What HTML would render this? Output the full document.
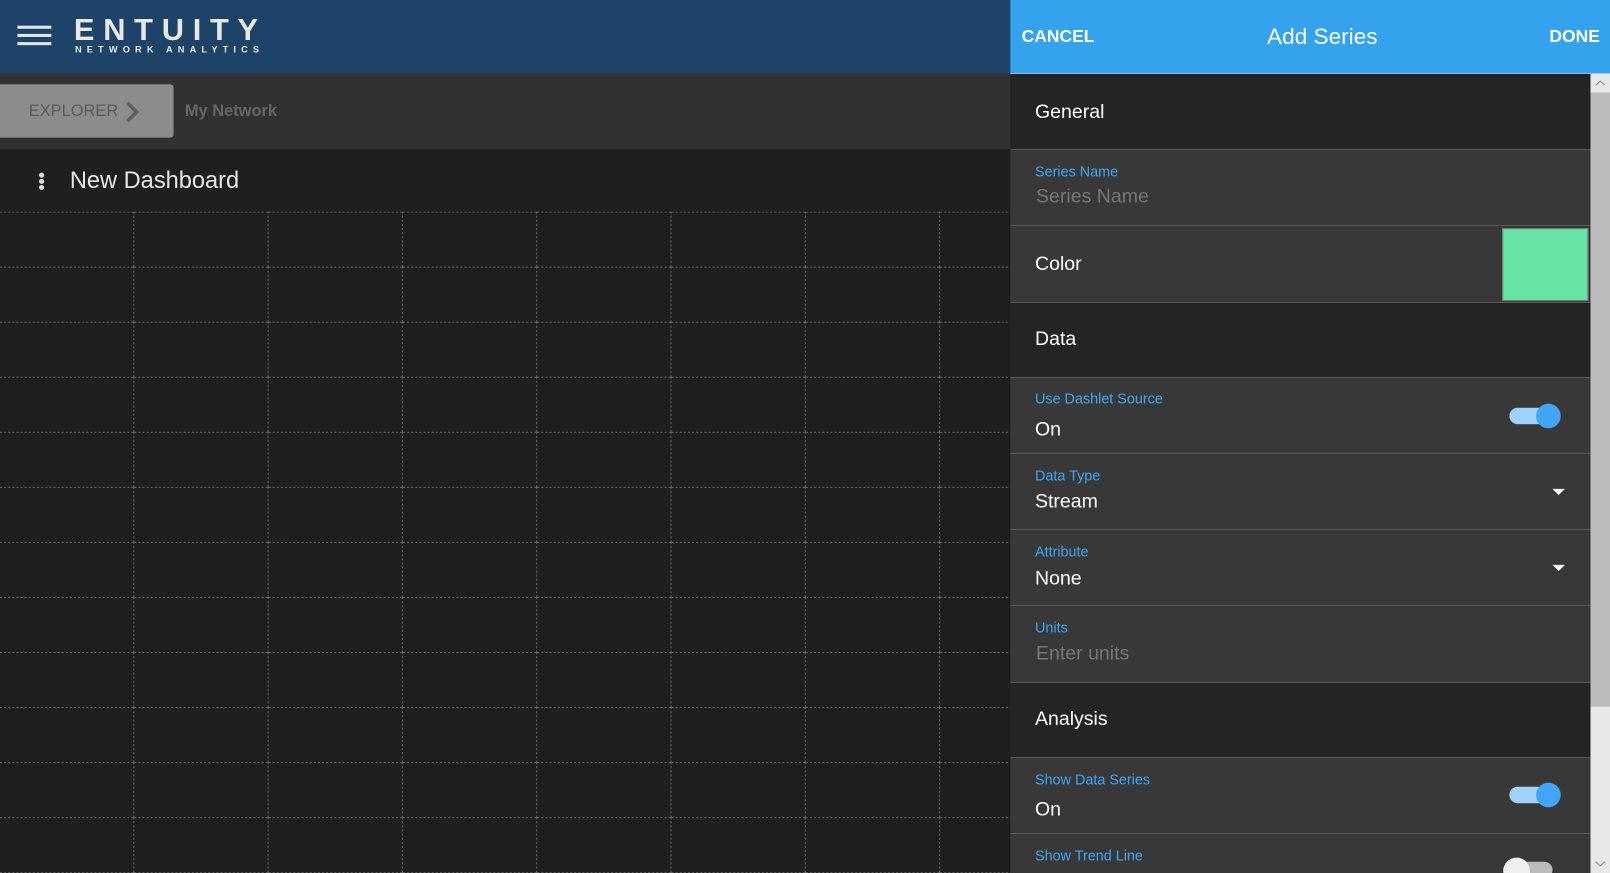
<!DOCTYPE html>
<html><head><style>
html,body{margin:0;padding:0;width:1610px;height:873px;overflow:hidden;background:#1e1e1e;font-family:"Liberation Sans",sans-serif}
#w{position:absolute;left:0;top:0;width:1568px;height:850px;transform:scale(1.02679,1.0271);transform-origin:0 0;overflow:hidden}
.a{position:absolute}
.top{left:0;top:0;width:984px;height:72px;background:#1d4468}
.hb{left:17px;width:33px;height:3px;background:#e6e6e6}
.logo{left:72px;top:13px;color:#e8e8e8;font-weight:bold;font-size:30px;letter-spacing:8.5px}
.sub{left:73px;top:43px;color:#e8e8e8;font-weight:bold;font-size:9px;letter-spacing:5px}
.bc{left:0;top:72px;width:984px;height:73px;background:#313131}
.exp{left:0;top:82px;width:169px;height:52px;background:#8c8c8c;border-radius:0 3px 3px 0}
.panel{left:984px;top:0;width:584px;height:850px;background:#383838}
.ph{left:0;top:0;width:584px;height:72px;background:#34a2ec;border-bottom:1px solid #8fc9f2;box-sizing:border-box;color:#fff}
.row{position:absolute;left:0;width:565px;border-bottom:1px solid #5a5a5a;box-sizing:border-box;background:#383838}
.dk{background:#242424}
.t{position:absolute;left:24px;color:#fff;font-size:19px}
.l{position:absolute;left:24px;top:13px;color:#42a5f5;font-size:14px}
.v{position:absolute;left:24px;top:40px;color:#fff;font-size:19px}
.ph2{color:#777}
.tg{position:absolute;left:486px;width:44px;height:16px;border-radius:8px;background:#9fd3fb}
.tg:after{content:"";position:absolute;right:-6px;top:-4px;width:24px;height:24px;border-radius:50%;background:#42a5f5}
.dd{position:absolute;left:528px;width:0;height:0;border-left:6px solid transparent;border-right:6px solid transparent;border-top:6px solid #fff}
</style></head><body><div id="w">
<div class="a top"></div>
<div class="a hb" style="top:25px"></div><div class="a hb" style="top:33px"></div><div class="a hb" style="top:41px"></div>
<div class="a logo">ENTUITY</div>
<div class="a sub">NETWORK ANALYTICS</div>
<div class="a bc"></div>
<div class="a exp"></div>
<div class="a" style="left:28px;top:100px;color:#5a5a5a;font-size:16px">EXPLORER</div>
<svg class="a" style="left:120px;top:97px" width="18" height="24"><path d="M4 3l9 9-9 9" stroke="#5e5e5e" stroke-width="3.5" fill="none"/></svg>
<div class="a" style="left:180px;top:100px;color:#666;font-size:16px;font-weight:bold">My Network</div>
<div class="a" style="left:0;top:145px;width:984px;height:62px;background:#1f1f1f"></div>
<div class="a" style="left:38px;top:168px;width:5px;height:5px;border-radius:50%;background:#ddd;box-shadow:0 6px 0 #ddd,0 12px 0 #ddd"></div>
<div class="a" style="left:68px;top:162px;color:#e6e6e6;font-size:23px">New Dashboard</div>
<svg class="a" style="left:0;top:206px" width="984" height="644">
<defs><pattern id="p" width="130.8" height="53.6" patternUnits="userSpaceOnUse">
<line x1="130.3" y1="0" x2="130.3" y2="53.6" stroke="#6a6a6a" stroke-width="1" stroke-dasharray="2,2"/>
<line x1="0" y1="0.5" x2="130.8" y2="0.5" stroke="#6a6a6a" stroke-width="1" stroke-dasharray="2,2"/>
</pattern></defs>
<rect width="984" height="644" fill="#1e1e1e"/><rect width="984" height="644" fill="url(#p)"/>
</svg>
<div class="a panel">
<div class="a ph">
<div class="a" style="left:11px;top:26px;font-size:17px;font-weight:bold">CANCEL</div>
<div class="a" style="left:250px;top:23px;font-size:22px">Add Series</div>
<div class="a" style="left:525px;top:26px;font-size:17px;font-weight:bold">DONE</div>
</div>
<div class="row dk" style="top:72px;height:74px"><div class="t" style="top:27px">General</div></div>
<div class="row" style="top:146px;height:74px"><div class="l">Series Name</div><div class="v ph2" style="top:35px;left:25px">Series Name</div></div>
<div class="row" style="top:220px;height:75px"><div class="t" style="top:27px">Color</div><div class="a" style="left:479px;top:2px;width:84px;height:71px;background:#68e3a6;border:1px solid #777;box-sizing:border-box"></div></div>
<div class="row dk" style="top:295px;height:73px"><div class="t" style="top:25px">Data</div></div>
<div class="row" style="top:368px;height:74px"><div class="l" style="top:12px">Use Dashlet Source</div><div class="v">On</div><div class="tg" style="top:29px"></div></div>
<div class="row" style="top:442px;height:74px"><div class="l">Data Type</div><div class="v" style="top:36px">Stream</div><div class="dd" style="top:34px"></div></div>
<div class="row" style="top:516px;height:74px"><div class="l">Attribute</div><div class="v" style="top:37px">None</div><div class="dd" style="top:34px"></div></div>
<div class="row" style="top:590px;height:75px"><div class="l">Units</div><div class="v ph2" style="top:36px;left:25px">Enter units</div></div>
<div class="row dk" style="top:665px;height:73px"><div class="t" style="top:25px">Analysis</div></div>
<div class="row" style="top:738px;height:74px"><div class="l">Show Data Series</div><div class="v">On</div><div class="tg" style="top:28px"></div></div>
<div class="row" style="top:812px;height:60px"><div class="l">Show Trend Line</div>
<div class="a" style="left:480px;top:27px;width:48px;height:16px;border-radius:8px;background:#bbb"></div><div class="a" style="left:480px;top:23px;width:26px;height:26px;border-radius:50%;background:#f0f0f0"></div></div>
<div class="a" style="left:565px;top:72px;width:19px;height:778px;background:#e8e8e8"></div>
<div class="a" style="left:565px;top:90px;width:19px;height:598px;background:#bcbcbc"></div>
<svg class="a" style="left:568px;top:76px" width="13" height="10"><path d="M2 7l4.5-4 4.5 4" stroke="#888" fill="none"/></svg>
<svg class="a" style="left:568px;top:836px" width="13" height="10"><path d="M2 3l4.5 4 4.5-4" stroke="#888" fill="none"/></svg>
</div>
</div></body></html>
